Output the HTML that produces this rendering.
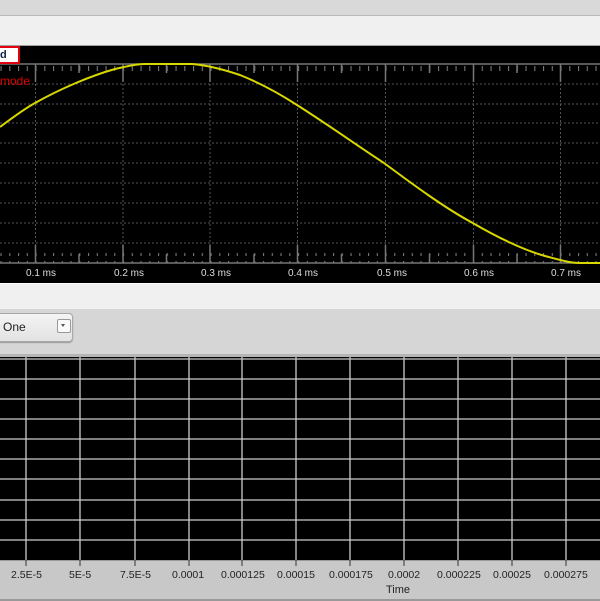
<!DOCTYPE html><html><head><style>
body{margin:0;width:600px;height:600px;overflow:hidden;position:relative;background:#d6d6d6;font-family:"Liberation Sans",sans-serif}
div{position:absolute}
.l{color:#ddd;font-size:10px;top:268px}
.b{color:#222;font-size:10.5px;top:569px}
</style></head><body>
<div style="left:0;top:0;width:600px;height:15px;background:#d9d9d9;border-bottom:1px solid #b8b8b8"></div>
<div style="left:0;top:16px;width:600px;height:29px;background:#f0f0f0;border-bottom:1px solid #a0a0a0"></div>
<div style="left:0;top:46px;width:600px;height:237px;background:#000"></div>
<svg style="position:absolute;left:0;top:46px" width="600" height="237">
<defs>
<pattern id="tt" x="-8.25" y="0" width="8.75" height="10" patternUnits="userSpaceOnUse"><line x1="0.5" x2="0.5" y1="0" y2="5" stroke="#777" stroke-width="1.2"/></pattern>
<pattern id="tb" x="-8.25" y="0" width="8.75" height="10" patternUnits="userSpaceOnUse"><line x1="0.5" x2="0.5" y1="5" y2="10" stroke="#777" stroke-width="1.2"/></pattern>
</defs>
<rect x="0" y="18" width="600" height="10" fill="url(#tt)"/>
<rect x="0" y="207" width="600" height="10" fill="url(#tb)"/>
<g stroke="#555" stroke-width="1" stroke-dasharray="2,2">
<line x1="0" x2="600" y1="38" y2="38"/><line x1="0" x2="600" y1="58" y2="58"/><line x1="0" x2="600" y1="77" y2="77"/><line x1="0" x2="600" y1="97" y2="97"/><line x1="0" x2="600" y1="117" y2="117"/><line x1="0" x2="600" y1="137" y2="137"/><line x1="0" x2="600" y1="157" y2="157"/><line x1="0" x2="600" y1="177" y2="177"/><line x1="0" x2="600" y1="197" y2="197"/>
<line y1="18" y2="217" x1="35.5" x2="35.5"/><line y1="18" y2="217" x1="123" x2="123"/><line y1="18" y2="217" x1="210" x2="210"/><line y1="18" y2="217" x1="297.5" x2="297.5"/><line y1="18" y2="217" x1="385.5" x2="385.5"/><line y1="18" y2="217" x1="473.5" x2="473.5"/><line y1="18" y2="217" x1="560.5" x2="560.5"/>
</g>
<g stroke="#777" stroke-width="1.5">
<line x1="0" x2="600" y1="18" y2="18"/><line x1="0" x2="600" y1="217" y2="217"/>
<line y1="18" y2="36" x1="35.5" x2="35.5"/><line y1="18" y2="36" x1="123" x2="123"/><line y1="18" y2="36" x1="210" x2="210"/><line y1="18" y2="36" x1="297.5" x2="297.5"/><line y1="18" y2="36" x1="385.5" x2="385.5"/><line y1="18" y2="36" x1="473.5" x2="473.5"/><line y1="18" y2="36" x1="560.5" x2="560.5"/>
<line y1="199" y2="217" x1="35.5" x2="35.5"/><line y1="199" y2="217" x1="123" x2="123"/><line y1="199" y2="217" x1="210" x2="210"/><line y1="199" y2="217" x1="297.5" x2="297.5"/><line y1="199" y2="217" x1="385.5" x2="385.5"/><line y1="199" y2="217" x1="473.5" x2="473.5"/><line y1="199" y2="217" x1="560.5" x2="560.5"/>
<line y1="18" y2="27" x1="79" x2="79"/><line y1="18" y2="27" x1="166.5" x2="166.5"/><line y1="18" y2="27" x1="254" x2="254"/><line y1="18" y2="27" x1="341.5" x2="341.5"/><line y1="18" y2="27" x1="429.5" x2="429.5"/><line y1="18" y2="27" x1="517" x2="517"/>
<line y1="208" y2="217" x1="79" x2="79"/><line y1="208" y2="217" x1="166.5" x2="166.5"/><line y1="208" y2="217" x1="254" x2="254"/><line y1="208" y2="217" x1="341.5" x2="341.5"/><line y1="208" y2="217" x1="429.5" x2="429.5"/><line y1="208" y2="217" x1="517" x2="517"/>
</g>
<path d="M0,81 C12,72 24,63 35,57 C60,43 90,30 115,23 C128,20 137,18 145,18 L192,18 C205,19 222,23 240,29 C260,37 280,48 297,59 C330,80 355,98 384,117 C415,140 445,162 471,176 C495,190 520,203 545,210 C560,214 570,217 580,217 L600,217" fill="none" stroke="#d8d800" stroke-width="2"/>
</svg>
<div style="left:-2px;top:46px;width:18px;height:14px;background:#fff;border:2px solid #e0000e;font-size:11px;font-weight:bold;color:#124;line-height:14px">d</div>
<div style="left:0;top:74px;color:#e00000;font-size:12px">mode</div>
<div class="l" style="left:26px">0.1 ms</div><div class="l" style="left:114px">0.2 ms</div><div class="l" style="left:201px">0.3 ms</div><div class="l" style="left:288px">0.4 ms</div><div class="l" style="left:377px">0.5 ms</div><div class="l" style="left:464px">0.6 ms</div><div class="l" style="left:551px">0.7 ms</div>
<div style="left:0;top:283px;width:600px;height:25px;background:#f0f0f0;border-top:1px solid #fff"></div>
<div style="left:-10px;top:313px;width:81px;height:27px;background:linear-gradient(#f4f4f4,#e2e2e2);border:1px solid #a8a8a8;border-radius:4px;box-shadow:0 1px 1px #999"></div>
<div style="left:3px;top:320px;font-size:12px;color:#222">One</div>
<div style="left:57px;top:319px;width:12px;height:12px;border:1px solid #999;background:#fafafa;border-radius:2px"></div>
<div style="left:61px;top:324px;width:0;height:0;border-left:2.5px solid transparent;border-right:2.5px solid transparent;border-top:3px solid #555"></div>
<div style="left:0;top:354px;width:600px;height:3px;background:#b5b5b5"></div>
<div style="left:0;top:357px;width:600px;height:203px;background:#000"></div>
<svg style="position:absolute;left:0;top:357px" width="600" height="212">
<g stroke="#ccc" stroke-width="1.3">
<line x1="0" x2="600" y1="2" y2="2"/><line x1="0" x2="600" y1="22" y2="22"/><line x1="0" x2="600" y1="42" y2="42"/><line x1="0" x2="600" y1="62" y2="62"/><line x1="0" x2="600" y1="82" y2="82"/><line x1="0" x2="600" y1="102" y2="102"/><line x1="0" x2="600" y1="122" y2="122"/><line x1="0" x2="600" y1="143" y2="143"/><line x1="0" x2="600" y1="163" y2="163"/><line x1="0" x2="600" y1="183" y2="183"/>
<line y1="0" y2="210" x1="26" x2="26"/><line y1="0" y2="210" x1="80" x2="80"/><line y1="0" y2="210" x1="135" x2="135"/><line y1="0" y2="210" x1="189" x2="189"/><line y1="0" y2="210" x1="242" x2="242"/><line y1="0" y2="210" x1="296" x2="296"/><line y1="0" y2="210" x1="350" x2="350"/><line y1="0" y2="210" x1="404" x2="404"/><line y1="0" y2="210" x1="458" x2="458"/><line y1="0" y2="210" x1="512" x2="512"/><line y1="0" y2="210" x1="566" x2="566"/>
</g></svg>
<div style="left:0;top:560px;width:600px;height:38px;background:#c8c8c8;border-top:1px solid #999;border-bottom:2px solid #999"></div>
<svg style="position:absolute;left:0;top:560px" width="600" height="8"><g stroke="#333"><line x1="26" x2="26" y1="0" y2="6"/><line x1="80" x2="80" y1="0" y2="6"/><line x1="135" x2="135" y1="0" y2="6"/><line x1="189" x2="189" y1="0" y2="6"/><line x1="242" x2="242" y1="0" y2="6"/><line x1="296" x2="296" y1="0" y2="6"/><line x1="350" x2="350" y1="0" y2="6"/><line x1="404" x2="404" y1="0" y2="6"/><line x1="458" x2="458" y1="0" y2="6"/><line x1="512" x2="512" y1="0" y2="6"/><line x1="566" x2="566" y1="0" y2="6"/></g></svg>
<div class="b" style="left:11px">2.5E-5</div><div class="b" style="left:69px">5E-5</div><div class="b" style="left:120px">7.5E-5</div><div class="b" style="left:172px">0.0001</div><div class="b" style="left:221px">0.000125</div><div class="b" style="left:277px">0.00015</div><div class="b" style="left:329px">0.000175</div><div class="b" style="left:388px">0.0002</div><div class="b" style="left:437px">0.000225</div><div class="b" style="left:493px">0.00025</div><div class="b" style="left:544px">0.000275</div>
<div style="left:386px;top:584px;font-size:11px;color:#222">Time</div>
</body></html>
